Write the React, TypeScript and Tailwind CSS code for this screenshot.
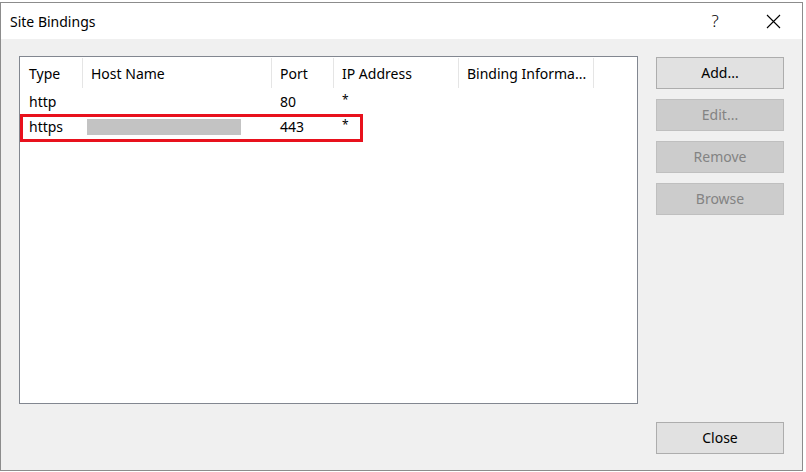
import React from "react";

const columns = [
  { label: "Type", width: "w-[63px]", pad: "pl-[9px]" },
  { label: "Host Name", width: "w-[189px]", pad: "pl-[8px]" },
  { label: "Port", width: "w-[62px]", pad: "pl-[8px]" },
  { label: "IP Address", width: "w-[125px]", pad: "pl-[8px]" },
  { label: "Binding Informa...", width: "w-[135px]", pad: "pl-[8px]" },
];

const bindings = [
  { type: "http", host: "", port: "80", ip: "*", redacted: false },
  { type: "https", host: "", port: "443", ip: "*", redacted: true },
];

function DialogButton({
  label,
  disabled,
}: {
  label: string;
  disabled?: boolean;
}) {
  return (
    <button
      disabled={disabled}
      className={`h-[32px] w-[128px] border text-[14px] leading-none ${
        disabled
          ? "bg-[#cccccc] border-[#bfbfbf] text-[#838383]"
          : "bg-[#e1e1e1] border-[#adadad] text-black"
      }`}
    >
      {label}
    </button>
  );
}

export default function App() {
  return (
    <div
      className="w-[806px] h-[472px] bg-white overflow-hidden"
      style={{ fontFamily: '"Segoe UI", "Noto Sans", "Open Sans", sans-serif' }}
    >
      <div className="mt-[2px] w-[803px] h-[469px] border border-[#8c8c8c] flex flex-col">
        {/* Title bar */}
        <div className="h-[36px] bg-white flex items-center text-black">
          <span className="pl-[9px] text-[14px]">Site Bindings</span>
          <div className="ml-auto flex items-center h-full">
            <span className="w-[58px] text-center text-[17px] font-light">?</span>
            <span className="w-[58px] h-full flex items-center justify-center">
              <svg width="15" height="15" viewBox="0 0 15 15">
                <path d="M1 1 L14 14 M14 1 L1 14" stroke="#000" strokeWidth="1.1" />
              </svg>
            </span>
          </div>
        </div>

        {/* Body */}
        <div className="flex-1 bg-[#f0f0f0] flex gap-[18px] pl-[18px] pr-[18px] pt-[17px] pb-[16px]">
          <div className="relative w-[619px] h-[348px] border border-[#828790] bg-white text-[14px] text-black">
            <div className="flex h-[32px]">
              {columns.map((c) => (
                <div
                  key={c.label}
                  className={`${c.width} ${c.pad} flex items-center border-r border-[#e5e5e5] my-[1px] whitespace-nowrap`}
                >
                  {c.label}
                </div>
              ))}
            </div>
            {bindings.map((b) => (
              <div key={b.type} className="flex h-[25px] items-center">
                <div className="w-[63px] pl-[9px]">{b.type}</div>
                <div className="w-[189px] pl-[4px]">
                  {b.redacted && <div className="w-[154px] h-[16px] bg-[#c3c3c3]" />}
                </div>
                <div className="w-[62px] pl-[8px]">{b.port}</div>
                <div className="w-[125px] pl-[8px] text-[12px] -mt-[4px]">{b.ip}</div>
              </div>
            ))}
            {/* highlight around https row */}
            <div className="absolute left-0 top-[57px] w-[343px] h-[28px] border-[3px] border-[#e8111d]" />
          </div>

          <div className="w-[128px] flex flex-col gap-[10px] pt-[1px]">
            <DialogButton label="Add..." />
            <DialogButton label="Edit..." disabled />
            <DialogButton label="Remove" disabled />
            <DialogButton label="Browse" disabled />
            <div className="mt-auto">
              <DialogButton label="Close" />
            </div>
          </div>
        </div>
      </div>
    </div>
  );
}
